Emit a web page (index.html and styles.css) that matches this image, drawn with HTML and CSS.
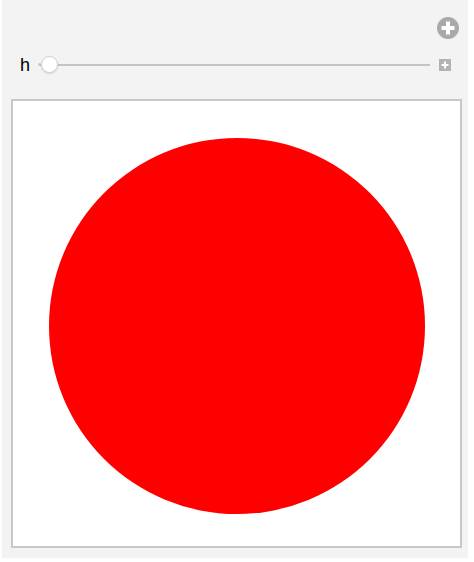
FILE: index.html
```html
<!DOCTYPE html>
<html lang="en">
<head>
  <meta charset="UTF-8">
  <title>Manipulate</title>
  <link rel="stylesheet" href="styles.css">
</head>
<body>
  <div class="panel">
    <div class="top-bar">
      <svg class="add-icon" width="22" height="22" viewBox="0 0 22 22">
        <circle cx="11" cy="11" r="11" fill="#a9a9a9"/>
        <rect x="9" y="4.5" width="4" height="13" fill="#fff"/>
        <rect x="4.5" y="9" width="13" height="4" fill="#fff"/>
      </svg>
    </div>
    <div class="control-row">
      <span class="label">h</span>
      <div class="slider">
        <span class="tick"></span>
        <span class="thumb"></span>
      </div>
      <svg class="expand-icon" width="12" height="12" viewBox="0 0 12 12">
        <rect width="12" height="12" fill="#b3b3b3"/>
        <rect x="5" y="2.5" width="2" height="7" fill="#fff"/>
        <rect x="2.5" y="5" width="7" height="2" fill="#fff"/>
      </svg>
    </div>
    <div class="output">
      <div class="disk"></div>
    </div>
  </div>
</body>
</html>
```

FILE: styles.css
```css
* {
  margin: 0;
  padding: 0;
  box-sizing: border-box;
}

body {
  background: #ffffff;
  font-family: 'Liberation Sans', Arial, sans-serif;
  width: 474px;
  height: 562px;
  overflow: hidden;
}

.panel {
  margin-left: 2px;
  width: 466px;
  height: 558px;
  background: #f3f3f3;
  padding: 0 6px 0 9px;
  display: flex;
  flex-direction: column;
}

.top-bar {
  height: 39px;
  display: flex;
  justify-content: flex-end;
  align-items: flex-end;
  padding-right: 3px;
}

.control-row {
  height: 60px;
  display: flex;
  align-items: center;
  padding-left: 9px;
  padding-bottom: 8px;
}

.label {
  font-size: 18px;
  color: #000;
  width: 18px;
}

.slider {
  position: relative;
  flex: 1;
  height: 2px;
  background: #c4c4c4;
  margin-left: 2px;
  margin-right: 9px;
}

.tick {
  position: absolute;
  left: -2px;
  top: -1px;
  width: 3px;
  height: 3px;
  border-radius: 50%;
  background: #c9c9c9;
}

.thumb {
  position: absolute;
  left: 1px;
  top: -8px;
  width: 17px;
  height: 17px;
  border-radius: 50%;
  background: #ffffff;
  border: 1px solid #cfcfcf;
  box-shadow: 0 1px 2px rgba(0, 0, 0, 0.12);
}

.expand-icon {
  margin-right: 11px;
  flex-shrink: 0;
}

.output {
  width: 451px;
  height: 449px;
  background: #ffffff;
  border: 2px solid #c8c8c8;
  display: flex;
  justify-content: center;
  align-items: center;
}

.disk {
  width: 376px;
  height: 376px;
  border-radius: 50%;
  background: #ff0000;
  margin-left: 1px;
  margin-top: 4px;
}
```
